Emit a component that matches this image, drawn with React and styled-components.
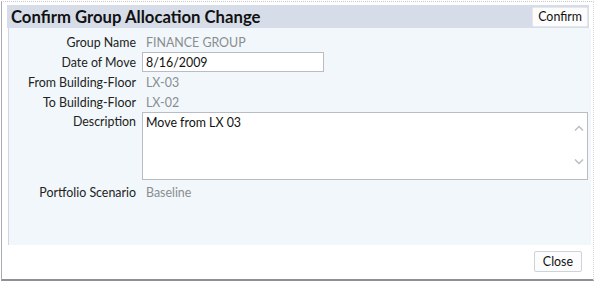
import React from "react";
import styled, { createGlobalStyle } from "styled-components";

const GlobalStyle = createGlobalStyle`
  html, body {
    margin: 0;
    padding: 0;
    background: #ffffff;
  }
  body {
    font-family: Lato, "Open Sans", sans-serif;
    font-size: 12.4px;
    color: #222;
  }
`;

const Dialog = styled.div`
  margin: 1px 0 0 1px;
  width: 593px;
  height: 280px;
  box-sizing: border-box;
  border-top: 1px dotted #c8c8c8;
  border-left: 1px solid #a9adb3;
  border-right: 1px dotted #d8d8d8;
  border-bottom: 2px solid #8d9096;
  padding: 3px 2px 0 4px;
  display: flex;
  flex-direction: column;
`;

const TitleBar = styled.div`
  height: 23px;
  margin-left: 1px;
  margin-right: 2px;
  background: #d6dde9;
  display: flex;
  align-items: center;
  justify-content: space-between;
  padding: 0 1px 0 4px;
`;

const Title = styled.h1`
  margin: 0;
  font-size: 16.7px;
  font-weight: 700;
  color: #111;
`;

const Button = styled.button`
  font-family: inherit;
  font-size: 12.4px;
  color: #111;
  background: #fcfcfc;
  border: 1px solid ${(p) => p.$border || "#e4e7ec"};
  border-radius: 2px;
  height: ${(p) => p.$height || 20}px;
  padding: 0 ${(p) => p.$pad || 7}px;
  cursor: pointer;
`;

const Panel = styled.div`
  height: 217px;
  margin-left: 2px;
  background: #f1f7fa;
  border-left: 1px solid #d2d6de;
  padding: 4px 3px 0 0;
  box-sizing: border-box;
`;

const Form = styled.div`
  display: grid;
  grid-template-columns: 127px 1fr;
  grid-template-rows: 20px 20px 20px 20px 68px 24px;
  column-gap: 6px;
  align-items: center;
`;

const Label = styled.div`
  text-align: right;
  align-self: ${(p) => (p.$top ? "start" : "center")};
  padding-top: ${(p) => (p.$top ? 2 : 0)}px;
  white-space: nowrap;
`;

const Value = styled.div`
  color: #8a8d90;
  padding-left: 4px;
  white-space: nowrap;
`;

const Input = styled.input`
  width: 182px;
  height: 20px;
  box-sizing: border-box;
  border: 1px solid #b9bcc2;
  background: #fff;
  font-family: inherit;
  font-size: 12.4px;
  color: #111;
  padding: 0 3px;
  outline: none;
`;

const AreaBox = styled.div`
  height: 68px;
  display: flex;
  border: 1px solid #b9bcc2;
  background: #fff;
  box-sizing: border-box;
`;

const Area = styled.textarea`
  flex: 1;
  border: none;
  resize: none;
  outline: none;
  overflow: hidden;
  background: transparent;
  font-family: inherit;
  font-size: 12.4px;
  color: #111;
  padding: 2px 3px;
`;

const ScrollCol = styled.div`
  width: 16px;
  display: flex;
  flex-direction: column;
  justify-content: space-between;
  align-items: center;
  padding: 12px 0 14px;
`;

const Footer = styled.div`
  flex: 1;
  display: flex;
  justify-content: flex-end;
  align-items: center;
  padding: 0 9px 2px 0;
`;

const Chevron = ({ up }) => (
  <svg width="10" height="6" viewBox="0 0 10 6">
    <path
      d={up ? "M1 5.5 L5 1.5 L9 5.5" : "M1 0.5 L5 4.5 L9 0.5"}
      fill="none"
      stroke="#b8bcc4"
      strokeWidth="1.4"
    />
  </svg>
);

const App = () => {
  return (
    <>
      <GlobalStyle />
      <Dialog>
        <TitleBar>
          <Title>Confirm Group Allocation Change</Title>
          <Button $pad={5}>Confirm</Button>
        </TitleBar>
        <Panel>
          <Form>
            <Label>Group Name</Label>
            <Value>FINANCE GROUP</Value>
            <Label>Date of Move</Label>
            <div>
              <Input defaultValue="8/16/2009" />
            </div>
            <Label>From Building-Floor</Label>
            <Value>LX-03</Value>
            <Label>To Building-Floor</Label>
            <Value>LX-02</Value>
            <Label $top>Description</Label>
            <AreaBox>
              <Area defaultValue="Move from LX 03" />
              <ScrollCol>
                <Chevron up />
                <Chevron />
              </ScrollCol>
            </AreaBox>
            <Label>Portfolio Scenario</Label>
            <Value>Baseline</Value>
          </Form>
        </Panel>
        <Footer>
          <Button $border="#cfd3d9" $height={21} $pad={8}>
            Close
          </Button>
        </Footer>
      </Dialog>
    </>
  );
};

export default App;
